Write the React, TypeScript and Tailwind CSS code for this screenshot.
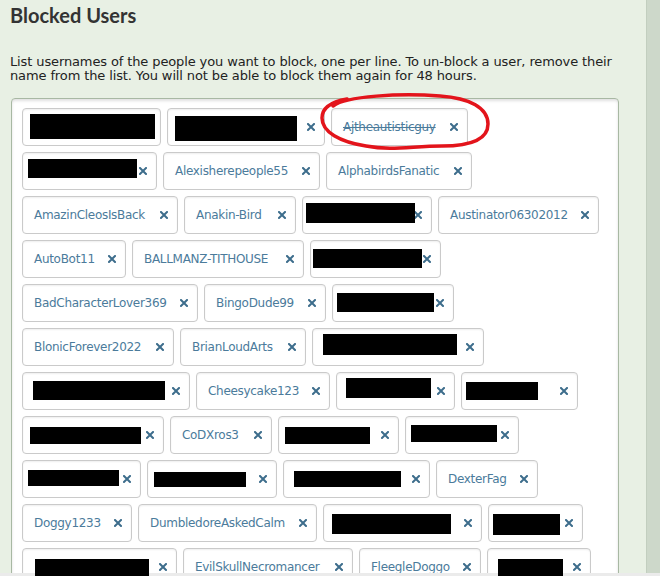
import React from 'react';

type Box = [number, number, number, number];
type Tag = { w: number; name?: string; box?: Box; strike?: boolean };

// rows of the blocked-users token list; widths taken from the screenshot
const rows: Tag[][] = [
  [
    { w: 139, box: [8, 6, 125, 25] },
    { w: 158, box: [8, 8, 122, 25] },
    { w: 137, name: 'Ajtheautisticguy', strike: true },
  ],
  [
    { w: 135, box: [6, 7, 109, 19] },
    { w: 157, name: 'Alexisherepeople55' },
    { w: 146, name: 'AlphabirdsFanatic' },
  ],
  [
    { w: 156, name: 'AmazinCleosIsBack' },
    { w: 112, name: 'Anakin-Bird' },
    { w: 130, box: [4, 7, 109, 20] },
    { w: 161, name: 'Austinator06302012' },
  ],
  [
    { w: 104, name: 'AutoBot11' },
    { w: 172, name: 'BALLMANZ-TITHOUSE' },
    { w: 131, box: [3, 9, 109, 19] },
  ],
  [
    { w: 176, name: 'BadCharacterLover369' },
    { w: 122, name: 'BingoDude99' },
    { w: 122, box: [5, 9, 97, 19] },
  ],
  [
    { w: 152, name: 'BlonicForever2022' },
    { w: 126, name: 'BrianLoudArts' },
    { w: 172, box: [11, 6, 134, 21] },
  ],
  [
    { w: 168, box: [11, 9, 132, 19] },
    { w: 134, name: 'Cheesycake123' },
    { w: 119, box: [10, 6, 85, 20] },
    { w: 117, box: [5, 10, 72, 18] },
  ],
  [
    { w: 142, box: [8, 11, 111, 17] },
    { w: 102, name: 'CoDXros3' },
    { w: 121, box: [7, 11, 85, 17] },
    { w: 114, box: [6, 9, 86, 17] },
  ],
  [
    { w: 119, box: [6, 10, 91, 16] },
    { w: 130, box: [7, 12, 92, 15] },
    { w: 147, box: [11, 11, 107, 16] },
    { w: 102, name: 'DexterFag' },
  ],
  [
    { w: 110, name: 'Doggy1233' },
    { w: 179, name: 'DumbledoreAskedCalm' },
    { w: 159, box: [9, 10, 119, 20] },
    { w: 95, box: [5, 10, 67, 21] },
  ],
  [
    { w: 155, box: [13, 11, 114, 30] },
    { w: 170, name: 'EvilSkullNecromancer' },
    { w: 122, name: 'FleegleDoggo' },
    { w: 104, box: [11, 11, 65, 30] },
  ],
];

const Cross = () => (
  <svg width="8" height="8" viewBox="0 0 8 8" className="shrink-0">
    <path d="M1 1L7 7M7 1L1 7" stroke="#3d6d8c" strokeWidth="2" strokeLinecap="square" />
  </svg>
);

const Token = ({ tag }: { tag: Tag }) => (
  <div
    className="relative flex items-center justify-between h-[38px] pl-[11px] pr-[9px] bg-white border border-[#cacaca] rounded-[4px] shadow-[inset_0_1px_2px_rgba(0,0,0,0.07)] shrink-0"
    style={{ width: tag.w }}
  >
    <span className={`text-[12px] tracking-[-0.3px] text-[#4b7b9b] whitespace-nowrap ${tag.strike ? 'line-through' : ''}`}>
      {tag.name ?? ''}
    </span>
    <Cross />
    {tag.box && (
      <div
        className="absolute bg-black z-20"
        style={{ left: tag.box[0] - 1, top: tag.box[1] - 1, width: tag.box[2], height: tag.box[3] }}
      />
    )}
  </div>
);

export default function App() {
  return (
    <div className="relative w-[660px] h-[576px] overflow-hidden bg-[#e8f0e4] flex font-['DejaVu_Sans',sans-serif]">
      <div className="w-[646px] shrink-0">
        <h1 className="pl-[10px] pt-[2px] text-[20px] leading-[26px] font-bold text-[#333333] font-['Lato',sans-serif]">
          Blocked Users
        </h1>
        <p className="pl-[10px] pt-[27px] text-[13px] leading-[14px] tracking-[-0.12px] text-[#222222]">
          List usernames of the people you want to block, one per line. To un-block a user, remove their
          <br />
          name from the list. You will not be able to block them again for 48 hours.
        </p>
        <div className="ml-[11px] mt-[15px] w-[608px] h-[520px] bg-white border border-[#a8b8a3] rounded-[4px] shadow-[inset_0_2px_3px_rgba(0,0,0,0.12)] pl-[10px] pt-[9px] flex flex-col gap-[6px]">
          {rows.map((row, i) => (
            <div key={i} className="flex gap-[6px]">
              {row.map((t, j) => (
                <Token key={j} tag={t} />
              ))}
            </div>
          ))}
        </div>
      </div>
      <div className="flex-1 bg-[#cdd8ca] border-l border-[#c2cebf]" />

      <div className="absolute left-0 right-0 bottom-0 h-[3px] bg-[#ebebeb] z-10" />

      <svg className="absolute left-0 top-0 z-30 pointer-events-none" width="660" height="576">
        <path
          d="M333 106 C346 96 400 93 440 96 C470 98 488 108 488 124 C488 140 471 146 442 146 C412 146 392 151 366 146 C340 142 322 132 322 118 C322 108 330 102 347 99"
          fill="none"
          stroke="#e3141b"
          strokeWidth="3.5"
          strokeLinecap="round"
        />
      </svg>
    </div>
  );
}
